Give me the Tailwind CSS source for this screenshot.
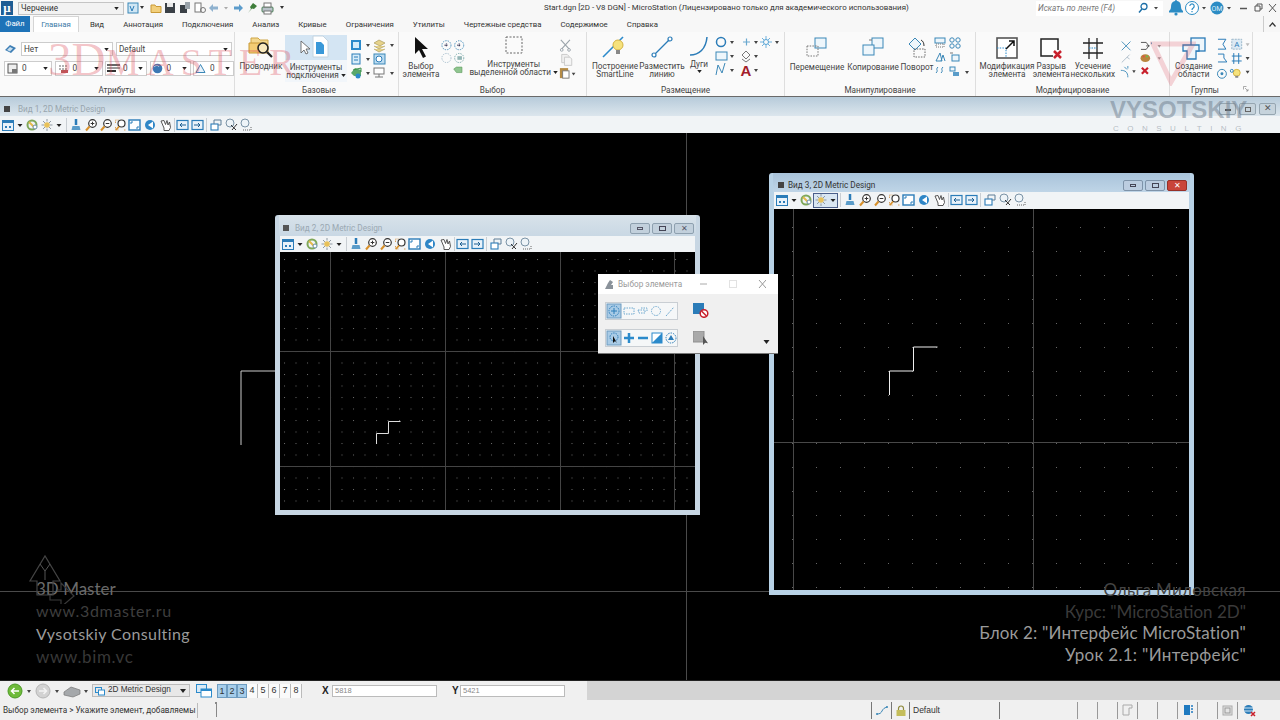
<!DOCTYPE html>
<html lang="ru">
<head>
    <meta charset="UTF-8">
    <title>MicroStation</title>
    <script src="https://cdn.jsdelivr.net/npm/@tailwindcss/browser@4"></script>
</head>
<body class="bg-black">
<svg class="hidden">
    <symbol id="dd" viewBox="0 0 6 4"><polygon points="0,0 6,0 3,4" fill="#222"/></symbol>
    <symbol id="viewbar" viewBox="0 0 256 16">
        <rect x="2.500" y="3.500" width="11" height="10" fill="#e8f2fa" stroke="#2b7cb8"/><rect x="2" y="3" width="12" height="3" fill="#2b7cb8"/><path d="M5 10h2M9 10h2" stroke="#2b7cb8" stroke-width="2"/>
        <polygon points="17.500,7 22.500,7 20,10" fill="#222"/>
        <circle cx="32" cy="8" r="4.500" fill="none" stroke="#7fa85a" stroke-width="2"/><path d="M29 5l6 6" stroke="#e4b94a" stroke-width="2"/><circle cx="35" cy="10" r="2" fill="#fff" stroke="#6a8fa8"/>
        <circle cx="47" cy="8" r="2.800" fill="#e7c15b"/><path d="M47 2v2.500M47 11.500v2.500M41.500 8h2.500M50 8h2.500M43 4l2 2M49 10l2 2M51 4l-2 2M45 10l-2 2" stroke="#8f9aa3"/>
        <polygon points="56.500,7 61.500,7 59,10" fill="#222"/>
        <path d="M66.500 1v14" stroke="#c9ced3"/>
        <path d="M76 2v6" stroke="#2b7cb8" stroke-width="2.500"/><path d="M71.500 13l1-4h7l1 4z" fill="#5a9cc9"/>
        <circle cx="92.500" cy="6.500" r="3.800" fill="#fff" stroke="#333" stroke-width="1.200"/><path d="M90.700 6.500h3.600M92.500 4.700v3.600" stroke="#333"/><path d="M89.500 9.500l-3.500 4" stroke="#d8912c" stroke-width="2"/>
        <circle cx="107.500" cy="6.500" r="3.800" fill="#fff" stroke="#333" stroke-width="1.200"/><path d="M105.700 6.500h3.600" stroke="#333"/><path d="M104.500 9.500l-3.500 4" stroke="#d8912c" stroke-width="2"/>
        <path d="M115.500 6V3h3M125.500 13h-2M115.500 10v3h3" fill="none" stroke="#d8a05c" stroke-dasharray="1.500 1"/><circle cx="121.500" cy="6.500" r="3.500" fill="#fff" stroke="#333" stroke-width="1.200"/><path d="M119 9.500l-3 3.500" stroke="#d8912c" stroke-width="1.800"/>
        <rect x="129" y="3" width="11" height="10" fill="#fff" stroke="#2b7cb8" stroke-width="1.400"/><path d="M131 5l2 0M131 5v2M138 11h-2M138 11V9" stroke="#2b7cb8"/>
        <circle cx="150" cy="8" r="5" fill="#2e86c6"/><path d="M153 4.500l-5 3.500 5 3.500z" fill="#fff"/>
        <path d="M161 4l3 7v2.500h5l1.500-3-1-5.500-1.500 3-1-4.500-1.500 4-1.500-4z" fill="#fff" stroke="#444" stroke-width=".9"/>
        <path d="M174.500 1v14" stroke="#c9ced3"/>
        <rect x="177" y="3.500" width="11" height="9" fill="#e8f2fa" stroke="#2b7cb8" stroke-width="1.200"/><path d="M186 8h-6M182 6l-2 2 2 2" fill="none" stroke="#1c5f91"/>
        <rect x="192" y="3.500" width="11" height="9" fill="#e8f2fa" stroke="#2b7cb8" stroke-width="1.200"/><path d="M194 8h6M198 6l2 2-2 2" fill="none" stroke="#1c5f91"/>
        <path d="M206.500 1v14" stroke="#c9ced3"/>
        <rect x="211" y="7" width="7" height="6" fill="#fff" stroke="#2b7cb8" stroke-width="1.100"/><path d="M214 7V3h7v5h-3" fill="none" stroke="#5c7d96"/>
        <circle cx="230" cy="6" r="4" fill="#eef4f8" stroke="#7b93a6"/><path d="M231 8l5 5M237 7l-5 6" stroke="#333"/>
        <circle cx="245" cy="6" r="4" fill="#eef4f8" stroke="#7b93a6"/><path d="M243 13h8M251 13V9" stroke="#666" stroke-dasharray="1 1"/>
    </symbol>
    <symbol id="ringdots" viewBox="0 0 12 12"><circle cx="6" cy="6" r="5" fill="none" stroke="#3a87b7" stroke-dasharray="1.500 1.200"/><path d="M4 6h4M6 4v4" stroke="#335" stroke-width="1.400" stroke-dasharray="1 1"/></symbol>
</svg>

<div class="relative w-[1280px] h-[720px] overflow-hidden flex flex-col bg-black text-[#444] font-['Roboto',sans-serif]">

    <!-- title bar -->
    <div class="h-[16px] shrink-0 flex items-center bg-[#f7f7f7] relative">
        <div class="ml-[1px] w-[12px] h-[14px] bg-[#1e5d94] text-white text-[13px] leading-[13px] text-center font-bold font-['Liberation_Serif',serif]">μ</div>
        <div class="ml-[5px] w-[106px] h-[13px] bg-[#f2f2f2] border border-[#c4c4c4] flex items-center justify-between px-[2px] text-[8.200px] text-[#333]">
            <span>Черчение</span><svg class="w-[5px] h-[3px] mr-[2px]"><use href="#dd"/></svg>
        </div>
        <svg class="ml-[3px] w-[160px] h-[16px]" viewBox="0 0 160 16">
            <rect x="1" y="3" width="10" height="10" fill="#cfe6f4" stroke="#3a87b7"/><path d="M3 6l2 5 2-5" fill="none" stroke="#2b7cb8"/>
            <polygon points="13,6 17,6 15,9" fill="#333"/>
            <path d="M24 5h4l1 1.500h5v6h-10z" fill="#f2cf7b" stroke="#c99a37"/>
            <rect x="38" y="3" width="10" height="10" fill="#3a4046"/><rect x="40" y="3" width="6" height="4" fill="#e8e8e8"/>
            <rect x="53" y="5" width="7" height="8" fill="#3a4046"/><rect x="58" y="2" width="5" height="7" fill="#9aa3aa"/>
            <rect x="68" y="3" width="6" height="9" fill="#fff" stroke="#777"/><circle cx="76" cy="10" r="2.500" fill="none" stroke="#777"/>
            <path d="M82 8l4-4v2.500h5v3h-5V12z" fill="#8fb2cf"/>
            <polygon points="97,7 101,7 99,9.500" fill="#aaa"/>
            <path d="M116 8l-4-4v2.500h-5v3h5V12z" fill="#5c9ccb"/>
            <path d="M121 13l3-4-1-2 3-4 4 3-3 3-2-.500z" fill="#3e7d3a"/>
            <rect x="135" y="7" width="11" height="5" rx="1" fill="#b9c2c9" stroke="#4a7f57"/><rect x="137" y="3" width="7" height="4" fill="#fff" stroke="#777"/><rect x="137" y="11" width="7" height="3" fill="#fff" stroke="#777"/>
            <polygon points="153,6 157,6 155,9" fill="#333"/>
        </svg>
        <span class="absolute left-[544px] top-[0px] text-[7.900px] leading-[16px] text-[#333] whitespace-nowrap">Start.dgn [2D - V8 DGN] - MicroStation (Лицензировано только для академического использования)</span>
        <div class="ml-auto flex items-center h-[16px]">
            <div class="w-[127px] h-[15px] bg-white flex items-center pl-[2px] text-[8.200px] italic text-[#777]">
                <span>Искать по ленте (F4)</span>
                <svg class="ml-auto mr-[2px] w-[24px] h-[12px]" viewBox="0 0 24 12"><circle cx="7" cy="4.500" r="3" fill="none" stroke="#1d6fa8" stroke-width="1.300"/><path d="M5 7L2 10.500" stroke="#1d6fa8" stroke-width="1.500"/><polygon points="17,5 21,5 19,7.500" fill="#444"/></svg>
            </div>
            <svg class="ml-[5px] w-[112px] h-[16px]" viewBox="0 0 112 16">
                <path d="M7 1a1 1 0 0 1 2 0c3 .5 4 3 4 6 0 2 1 3 2 4v1.500H1V11c1-1 2-2 2-4 0-3 1-5.500 4-6z" fill="#2c8cc4"/><circle cx="8" cy="14" r="1.600" fill="#2c8cc4"/>
                <circle cx="24" cy="8" r="6.500" fill="#fff" stroke="#2c8cc4"/><path d="M21.800 6a2.200 2.200 0 1 1 3.400 2c-1 .6-1.200 1-1.200 2M24 11v1.300" fill="none" stroke="#2c8cc4" stroke-width="1.200"/>
                <polygon points="34,7 38,7 36,9.500" fill="#444"/>
                <circle cx="49" cy="8" r="6.500" fill="#2c8cc4"/>
                <text x="49" y="10.500" font-size="7" fill="#dfeef8" text-anchor="middle" font-family="Roboto">OM</text>
                <polygon points="59,7 63,7 61,9.500" fill="#444"/>
                <path d="M72 8.500h7" stroke="#555" stroke-width="1.500"/>
                <path d="M87 6h5v5h-5zM89 6V4h5v5h-2" fill="none" stroke="#555"/>
                <path d="M101 4l7 8M108 4l-7 8" stroke="#555"/>
            </svg>
        </div>
    </div>

    <!-- ribbon tabs -->
    <div class="h-[16px] shrink-0 flex items-end bg-[#f7f7f7] text-[7.800px] leading-[18px] text-[#333]">
        <div class="w-[30px] h-[16px] bg-[#1e73b8] text-white text-center leading-[16px]">Файл</div>
        <div class="ml-[3px] w-[46px] h-[16px] bg-white border-x border-t border-[#d5d5d5] text-center text-[#3d7ba8] leading-[16px]">Главная</div>
        <div class="ml-[11px] flex gap-[19.100px] whitespace-nowrap h-[16px]">
            <span>Вид</span><span>Аннотация</span><span>Подключения</span><span>Анализ</span><span>Кривые</span><span>Ограничения</span><span>Утилиты</span><span>Чертежные средства</span><span>Содержимое</span><span>Справка</span>
        </div>
        <div class="ml-auto h-[16px] flex items-center border-l border-[#ccc] pl-[5px] pr-[4px]"><svg class="w-[7px] h-[5px]" viewBox="0 0 7 5"><path d="M.5 4.500l3-3.500 3 3.500" fill="none" stroke="#333" stroke-width="1.200"/></svg></div>
    </div>

    <!-- ribbon -->
    <div class="h-[65px] shrink-0 flex bg-[#fafafa] border-b border-[#6a6a6a] text-[8.200px] leading-[8.200px] text-[#444]">

        <!-- Атрибуты -->
        <div class="w-[235px] shrink-0 flex flex-col border-r border-[#dedede]">
            <div class="h-[51px] flex flex-col gap-[5px] pt-[10px] pl-[4px]">
                <div class="flex items-center h-[14px]">
                    <svg class="w-[13px] h-[12px]" viewBox="0 0 13 12"><path d="M1 7l5-5 6 3-5 5z" fill="#3f7fb5"/><path d="M3 7l3-3 3 1.500-3 3z" fill="#c9dfee"/></svg>
                    <div class="ml-[4px] w-[92px] h-[14px] bg-white border border-[#ccc] flex items-center justify-between pl-[2px] pr-[3px]"><span>Нет</span><svg class="w-[5px] h-[3px]"><use href="#dd"/></svg></div>
                    <div class="ml-[3px] w-[116px] h-[14px] bg-white border border-[#ccc] flex items-center justify-between pl-[2px] pr-[3px]"><span>Default</span><svg class="w-[5px] h-[3px]"><use href="#dd"/></svg></div>
                </div>
                <div class="flex gap-[2.500px] h-[15px]">
                    <div class="w-[48px] bg-white border border-[#ccc] flex items-center justify-between pl-[2px] pr-[3px]"><svg class="w-[11px] h-[11px]" viewBox="0 0 11 11"><rect x="1" y="1" width="9" height="9" fill="#eee" stroke="#555"/><rect x="5" y="6" width="5" height="4" fill="#777"/></svg><span class="mr-auto ml-[4px]">0</span><svg class="w-[5px] h-[3px]"><use href="#dd"/></svg></div>
                    <div class="w-[48px] bg-white border border-[#ccc] flex items-center justify-between pl-[2px] pr-[3px]"><svg class="w-[11px] h-[11px]" viewBox="0 0 11 11"><path d="M1 3h9M1 6h9" stroke="#666" stroke-dasharray="2 1"/><rect x="3" y="7" width="7" height="3" fill="#b95858"/></svg><span class="mr-auto ml-[4px]">0</span><svg class="w-[5px] h-[3px]"><use href="#dd"/></svg></div>
                    <div class="w-[42px] bg-white border border-[#ccc] flex items-center justify-between pl-[1px] pr-[3px]"><svg class="w-[13px] h-[11px]" viewBox="0 0 13 11"><path d="M0 2h13" stroke="#333" stroke-width="1.500"/><path d="M0 5h13" stroke="#333"/><path d="M0 8h9" stroke="#333" stroke-width="2"/></svg><span class="mr-auto ml-[3px]">0</span><svg class="w-[5px] h-[3px]"><use href="#dd"/></svg></div>
                    <div class="w-[41px] bg-white border border-[#ccc] flex items-center justify-between pl-[1px] pr-[3px]"><svg class="w-[11px] h-[11px]" viewBox="0 0 11 11"><circle cx="5.500" cy="5.500" r="4.800" fill="#3c78b4"/><path d="M2 4c2-2 4-2 5 0" stroke="#bcd8ee" fill="none"/></svg><span class="mr-auto ml-[4px]">0</span><svg class="w-[5px] h-[3px]"><use href="#dd"/></svg></div>
                    <div class="w-[41px] bg-white border border-[#ccc] flex items-center justify-between pl-[1px] pr-[3px]"><svg class="w-[11px] h-[11px]" viewBox="0 0 11 11"><path d="M5.500 1.500l4.500 8h-9z" fill="#e8f2fa" stroke="#3a87b7"/></svg><span class="mr-auto ml-[4px]">0</span><svg class="w-[5px] h-[3px]"><use href="#dd"/></svg></div>
                </div>
            </div>
            <div class="h-[13px] text-center leading-[15px]">Атрибуты</div>
        </div>

        <!-- Базовые -->
        <div class="w-[164px] shrink-0 flex flex-col border-r border-[#dedede]">
            <div class="h-[51px] flex pt-[3px]">
                <div class="ml-[4px] w-[44px] flex flex-col items-center">
                    <svg class="w-[26px] h-[24px]" viewBox="0 0 26 24"><path d="M3 6V3h7l2 2h8v5H3z" fill="#f3d88f" stroke="#cfa648"/><path d="M1 8h17l2 3v7H1z" fill="#f3cd74" stroke="#c99a37"/><circle cx="15" cy="13" r="5" fill="#f9e9bd" stroke="#222" stroke-width="1.600"/><path d="M19 17l5 5" stroke="#222" stroke-width="2.200"/></svg>
                    <span class="mt-[3px]">Проводник</span>
                </div>
                <div class="ml-[2px] w-[62px] h-[47px] flex flex-col items-center bg-[#f2f6fa]">
                    <div class="w-full h-[25px] bg-[#d4e5f3] flex justify-center">
                        <svg class="w-[32px] h-[25px]" viewBox="0 0 32 25"><path d="M1 6v12l3-3 2 4 2-1-2-4h4z" fill="#fff" stroke="#555" stroke-width=".8"/><path d="M13 1h10l5 5v16H13z" fill="#fff" stroke="#c4d4e0"/><path d="M16 7h5l3 3v9h-8z" fill="#3a98d8"/></svg>
                    </div>
                    <span class="mt-[3px] text-center">Инструменты</span>
                    <span class="flex items-center gap-[2px]">подключения<svg class="w-[5px] h-[3px]"><use href="#dd"/></svg></span>
                </div>
                <svg class="ml-[3px] w-[46px] h-[44px] mt-[2px]" viewBox="0 0 46 44">
                    <rect x="1" y="3" width="10" height="10" fill="#2b8acb"/><rect x="3" y="5" width="6" height="6" fill="#d4ecfa"/>
                    <polygon points="16,7 20,7 18,10" fill="#444"/>
                    <path d="M24 6l5-3 6 3-5 3zM24 9l5 3 6-3M24 12l5 3 6-3" fill="#e6d28a" stroke="#a99a5c" stroke-width=".7"/>
                    <polygon points="40,7 44,7 42,10" fill="#444"/>
                    <rect x="2" y="17" width="8" height="10" fill="#d7ecf9" stroke="#2b7cb8"/><path d="M4 20h4M4 23h4" stroke="#2b7cb8"/>
                    <polygon points="16,21 20,21 18,24" fill="#444"/>
                    <rect x="24" y="17" width="11" height="10" fill="#bcdcf1" stroke="#3a87b7"/><circle cx="29" cy="22" r="3" fill="#fff" stroke="#2b7cb8"/>
                    <path d="M1 36l4-5 6 2v6H4z" fill="#5aa86a"/><path d="M3 33l8-2v4" fill="none" stroke="#3a8e4a"/><circle cx="8" cy="39" r="2.500" fill="#2b8acb"/>
                    <polygon points="16,35 20,35 18,38" fill="#444"/>
                    <rect x="24" y="31" width="10" height="6" fill="#fff" stroke="#777"/><path d="M29 37v3h-4M29 40h4" fill="none" stroke="#777"/>
                    <polygon points="40,35 44,35 42,38" fill="#444"/>
                </svg>
            </div>
            <div class="h-[13px] leading-[15px] ml-[67px] whitespace-nowrap">Базовые</div>
        </div>

        <!-- Выбор -->
        <div class="w-[188px] shrink-0 flex flex-col border-r border-[#dedede]">
            <div class="h-[51px] flex pt-[4px]">
                <div class="ml-[4px] w-[36px] flex flex-col items-center">
                    <svg class="w-[14px] h-[22px]" viewBox="0 0 14 22"><path d="M1 1v17l4-4 4 8 3-1.500-4-7.500h6z" fill="#111"/></svg>
                    <span class="mt-[4px]">Выбор</span><span>элемента</span>
                </div>
                <svg class="ml-[2px] w-[26px] h-[44px]" viewBox="0 0 26 44">
                    <use href="#ringdots" x="0" y="2" width="12" height="12"/><use href="#ringdots" x="14" y="2" width="12" height="12"/>
                    <circle cx="6" cy="22" r="5" fill="none" stroke="#9fb9c9" stroke-dasharray="1.500 1.200"/><circle cx="20" cy="22" r="5" fill="none" stroke="#6fa3a3" stroke-dasharray="1.500 1.200"/><rect x="18" y="20" width="5" height="4" fill="#93b5b5"/>
                    <path d="M14 34l3-2h6v6h-6z" fill="#8fc58f" stroke="#5f9c5f" stroke-width=".7"/>
                </svg>
                <div class="ml-[7px] w-[84px] flex flex-col items-center">
                    <svg class="w-[18px] h-[18px]" viewBox="0 0 18 18"><rect x="1" y="1" width="16" height="16" fill="none" stroke="#666" stroke-dasharray="2 1.500"/></svg>
                    <span class="mt-[6px]">Инструменты</span>
                    <span class="flex items-center gap-[2px] whitespace-nowrap">выделенной области<svg class="w-[5px] h-[3px]"><use href="#dd"/></svg></span>
                </div>
                <svg class="ml-[3px] w-[30px] h-[46px]" viewBox="0 0 30 46">
                    <path d="M2 2l9 10M12 2L3 12" stroke="#9aa3aa" stroke-width="1.200"/><circle cx="3" cy="13" r="1.500" fill="none" stroke="#9aa3aa"/><circle cx="11" cy="13" r="1.500" fill="none" stroke="#9aa3aa"/>
                    <path d="M3 18h6l2 2v7H3z" fill="#f0f0f0" stroke="#c8c8c8"/><path d="M6 21h6l2 2v7H6z" fill="#f5f5f5" stroke="#c8c8c8"/>
                    <rect x="1" y="33" width="9" height="11" fill="#b58b45"/><rect x="4" y="36" width="7" height="8" fill="#fff" stroke="#777"/>
                    <polygon points="14,38 18,38 16,41" fill="#444"/>
                </svg>
            </div>
            <div class="h-[13px] text-center leading-[15px]">Выбор</div>
        </div>

        <!-- Размещение -->
        <div class="w-[198px] shrink-0 flex flex-col border-r border-[#dedede]">
            <div class="h-[51px] flex pt-[3px]">
                <div class="ml-[3px] w-[50px] flex flex-col items-center">
                    <svg class="w-[28px] h-[24px]" viewBox="0 0 28 24"><path d="M2 22L22 2" stroke="#2b8acb" stroke-width="1.600"/><circle cx="17" cy="10" r="5" fill="#f6e27c" stroke="#d4b243"/><rect x="15" y="15" width="4" height="4" fill="#888"/></svg>
                    <span class="mt-[3px]">Построение</span><span>SmartLine</span>
                </div>
                <div class="ml-[-1px] w-[46px] flex flex-col items-center">
                    <svg class="w-[24px] h-[24px]" viewBox="0 0 24 24"><path d="M4 20L20 4" stroke="#2b7cb8" stroke-width="1.200"/><circle cx="4" cy="20" r="2" fill="#fff" stroke="#2b7cb8" stroke-width="1.200"/><circle cx="20" cy="4" r="2" fill="#fff" stroke="#2b7cb8" stroke-width="1.200"/></svg>
                    <span class="mt-[3px]">Разместить</span><span>линию</span>
                </div>
                <div class="ml-[2px] w-[24px] flex flex-col items-center">
                    <svg class="w-[20px] h-[22px]" viewBox="0 0 20 22"><path d="M1 20c9 0 16-6 17-18" fill="none" stroke="#2b7cb8" stroke-width="1.500"/></svg>
                    <span class="mt-[3px]">Дуги</span>
                    <svg class="w-[5px] h-[3px] mt-[2px]"><use href="#dd"/></svg>
                </div>
                <svg class="ml-[3px] w-[66px] h-[44px]" viewBox="0 0 66 44">
                    <circle cx="7" cy="7" r="4.500" fill="none" stroke="#2b7cb8" stroke-width="1.500"/><polygon points="16,6 20,6 18,9" fill="#444"/>
                    <path d="M29 7h7M32.500 3.500v7" stroke="#6aa8cf" stroke-width="1.200"/><polygon points="40,6 44,6 42,9" fill="#444"/>
                    <circle cx="52" cy="7" r="2.500" fill="none" stroke="#4ea0d4"/><path d="M52 1v3M52 10v3M46 7h3M55 7h3M48 3l2 2M54 9l2 2M56 3l-2 2M50 9l-2 2" stroke="#4ea0d4" stroke-width=".8"/><polygon points="61,6 65,6 63,9" fill="#444"/>
                    <rect x="2" y="17" width="11" height="8" fill="#eef6fb" stroke="#3a87b7"/><polygon points="16,20 20,20 18,23" fill="#444"/>
                    <path d="M28 20l4-4 4 4-4 4zM28 24l4 3 4-3" fill="none" stroke="#777"/><polygon points="40,20 44,20 42,23" fill="#444"/>
                    <path d="M2 40l2-10 4 8 3-10" fill="none" stroke="#3a87b7"/><polygon points="16,34 20,34 18,37" fill="#444"/>
                    <text x="32" y="41" font-size="15" font-weight="700" fill="#a3202a" text-anchor="middle" font-family="Liberation Sans">A</text><polygon points="40,34 44,34 42,37" fill="#444"/>
                </svg>
            </div>
            <div class="h-[13px] text-center leading-[15px]">Размещение</div>
        </div>

        <!-- Манипулирование -->
        <div class="w-[191px] shrink-0 flex flex-col border-r border-[#dedede]">
            <div class="h-[51px] flex pt-[5px]">
                <div class="ml-[6px] w-[52px] flex flex-col items-center">
                    <svg class="w-[24px] h-[22px]" viewBox="0 0 24 22"><rect x="10" y="1" width="11" height="10" fill="#eef6fb" stroke="#3a87b7"/><rect x="2" y="9" width="11" height="10" fill="none" stroke="#777" stroke-dasharray="1.500 1.200"/></svg>
                    <span class="mt-[4px]">Перемещение</span>
                </div>
                <div class="ml-[5px] w-[50px] flex flex-col items-center">
                    <svg class="w-[24px] h-[22px]" viewBox="0 0 24 22"><rect x="11" y="1" width="11" height="10" fill="#eef6fb" stroke="#3a87b7"/><rect x="2" y="8" width="11" height="10" fill="#eef6fb" stroke="#3a87b7"/><path d="M8 3h3" stroke="#777"/></svg>
                    <span class="mt-[4px]">Копирование</span>
                </div>
                <div class="ml-[3px] w-[32px] flex flex-col items-center">
                    <svg class="w-[20px] h-[22px]" viewBox="0 0 20 22"><path d="M2 7l6-6 6 6-6 6z" fill="#eef6fb" stroke="#3a87b7"/><rect x="7" y="12" width="11" height="8" fill="none" stroke="#666" stroke-dasharray="1.500 1.200"/><path d="M14 3c2 1 3 3 3 6" fill="none" stroke="#333"/></svg>
                    <span class="mt-[4px]">Поворот</span>
                </div>
                <svg class="ml-[1px] w-[40px] h-[42px]" viewBox="0 0 40 42">
                    <rect x="1" y="1" width="10" height="5" fill="#eef6fb" stroke="#3a87b7"/><rect x="2" y="7" width="8" height="3" fill="none" stroke="#777" stroke-dasharray="1 1"/>
                    <circle cx="18" cy="3" r="2.200" fill="none" stroke="#3a87b7"/><circle cx="24" cy="3" r="2.200" fill="none" stroke="#3a87b7"/><circle cx="18" cy="9" r="2.200" fill="none" stroke="#3a87b7"/><circle cx="24" cy="9" r="2.200" fill="none" stroke="#3a87b7"/>
                    <path d="M2 24l4-8 2 8zM7 24l2-6 2 6" fill="none" stroke="#3a87b7"/>
                    <rect x="18" y="18" width="7" height="6" fill="#eef6fb" stroke="#3a87b7"/><path d="M16 16h3" stroke="#777"/>
                    <path d="M2 36c3-3-1-3 2-6M7 36c3-3-1-3 2-6" fill="none" stroke="#3a87b7"/>
                    <rect x="16" y="30" width="5" height="4" fill="#eef6fb" stroke="#3a87b7"/><rect x="19" y="35" width="6" height="4" fill="#5a9cc9"/>
                    <polygon points="31,34 35,34 33,37" fill="#444"/>
                </svg>
            </div>
            <div class="h-[13px] text-center leading-[15px]">Манипулирование</div>
        </div>

        <!-- Модифицирование -->
        <div class="w-[194px] shrink-0 flex flex-col border-r border-[#dedede]">
            <div class="h-[51px] flex pt-[5px]">
                <div class="ml-[4px] w-[54px] flex flex-col items-center">
                    <svg class="w-[22px] h-[22px]" viewBox="0 0 22 22"><rect x="1" y="1" width="20" height="20" fill="#fff" stroke="#555" stroke-width="1.600"/><path d="M1 11h9v10" fill="none" stroke="#2b8acb" stroke-dasharray="1.500 1.200"/><path d="M10 12l8-8M13 4h5v5" fill="none" stroke="#111" stroke-width="1.500"/></svg>
                    <span class="mt-[3px]">Модификация</span><span>элемента</span>
                </div>
                <div class="ml-[-2px] w-[44px] flex flex-col items-center">
                    <svg class="w-[24px] h-[23px]" viewBox="0 0 24 23"><path d="M14 19H2V2h17v11" fill="#fff" stroke="#222" stroke-width="1.500"/><path d="M15 14l7 7M22 14l-7 7" stroke="#c8202c" stroke-width="2.500"/></svg>
                    <span class="mt-[2px]">Разрыв</span><span>элемента</span>
                </div>
                <div class="ml-[0px] w-[46px] flex flex-col items-center whitespace-nowrap">
                    <svg class="w-[22px] h-[23px]" viewBox="0 0 22 23"><path d="M7 1v21M15 1v21M1 6h20M1 16h20" stroke="#222" stroke-width="1.300"/><path d="M7 11h8" stroke="#2b8acb" stroke-dasharray="1.500 1"/></svg>
                    <span class="mt-[2px]">Усечение</span><span>нескольких</span>
                </div>
                <svg class="ml-[5px] w-[56px] h-[44px]" viewBox="0 0 56 44">
                    <path d="M2 2l10 10M12 2L2 12" stroke="#3a87b7"/>
                    <path d="M24 3h6l3 4-3 4h-6M30 7h4" fill="none" stroke="#444"/><path d="M36 3v2" stroke="#3a87b7"/><polygon points="43,6 47,6 45,9" fill="#999"/>
                    <path d="M2 26l6-6M8 20l3-3M8 20l3 2" fill="none" stroke="#a9b9c5"/>
                    <ellipse cx="29" cy="21" rx="5.500" ry="4.500" fill="#b9853e"/><circle cx="27" cy="19" r="1" fill="#e44"/><circle cx="31" cy="19" r="1" fill="#5c5"/><polygon points="43,20 47,20 45,23" fill="#999"/>
                    <path d="M1 35c5 0 8 2 8 8M9 33v-3M5 31l3 3" fill="none" stroke="#3a87b7"/><polygon points="14,35 18,35 16,38" fill="#444"/>
                    <path d="M25 32l7 7M32 32l-7 7" stroke="#c8202c" stroke-width="2.500"/>
                </svg>
            </div>
            <div class="h-[13px] text-center leading-[15px]">Модифицирование</div>
        </div>

        <!-- Группы -->
        <div class="w-[83px] shrink-0 flex flex-col border-r border-[#dedede]">
            <div class="h-[51px] flex pt-[5px]">
                <div class="ml-[2px] w-[44px] flex flex-col items-center">
                    <svg class="w-[24px] h-[24px]" viewBox="0 0 24 24"><rect x="9" y="1" width="14" height="13" fill="#eef6fb" stroke="#2b7cb8" stroke-width="1.300"/><path d="M1 8h16v6h-3v8H5v-8H1z" fill="#eef6fb" stroke="#2b7cb8" stroke-width="1.300"/></svg>
                    <span class="mt-[1px]">Создание</span><span>области</span>
                </div>
                <svg class="ml-[1px] w-[36px] h-[44px]" viewBox="0 0 36 44">
                    <path d="M2 2h8l-3 5 3 5H2" fill="none" stroke="#2b7cb8"/><rect x="16" y="2" width="10" height="10" fill="#dceaf4" stroke="#9ab6c9" stroke-dasharray="2 1"/><text x="21" y="10" font-size="8" fill="#2b7cb8" text-anchor="middle" font-family="Roboto">A</text><polygon points="30,6 34,6 32,9" fill="#bbb"/>
                    <path d="M2 17h6v4l3 4H2" fill="none" stroke="#2b7cb8"/><path d="M18 16v11M23 16v11M16 19h10M16 24h10" stroke="#2b7cb8"/><polygon points="30,20 34,20 32,23" fill="#444"/>
                    <circle cx="6" cy="37" r="4.500" fill="none" stroke="#3a87b7"/><circle cx="6" cy="37" r="1.500" fill="#3a87b7"/><circle cx="21" cy="36" r="3.500" fill="#f6e27c" stroke="#d4b243"/><rect x="19.500" y="39" width="3" height="2" fill="#888"/><circle cx="16" cy="34" r="1.500" fill="none" stroke="#3a87b7"/><polygon points="30,34 34,34 32,37" fill="#444"/>
                </svg>
            </div>
            <div class="h-[13px] flex items-start justify-between leading-[15px] pl-[21px] pr-[3px]"><span>Группы</span><svg class="w-[6px] h-[6px] mt-[3px]" viewBox="0 0 6 6"><path d="M.5 .5h3M.5 .5v3M2 2l3 3M5 3v2H3" fill="none" stroke="#888" stroke-width=".7"/></svg></div>
        </div>
        <div class="flex-1"></div>
    </div>

    <!-- view 1 -->
    <div class="h-[19px] shrink-0 flex items-center pt-[5px] bg-gradient-to-b from-[#b7cbda] to-[#dce6ed] pl-[4px] text-[8.200px] text-[#98a5ad]">
        <span class="w-[6px] h-[6px] bg-[#444]"></span>
        <span class="ml-[8px]">Вид 1, 2D Metric Design</span>
        <div class="ml-auto mr-[4px] flex gap-[3px]">
            <span class="w-[17px] h-[12px] rounded-[2px] bg-[#c6d3dc] border border-[#96a6b1] flex items-end justify-center pb-[3px]"><span class="w-[6px] h-[2px] border border-[#555]"></span></span>
            <span class="w-[17px] h-[12px] rounded-[2px] bg-[#c6d3dc] border border-[#96a6b1] flex items-center justify-center"><span class="w-[6px] h-[5px] border border-[#666]"></span></span>
            <span class="w-[17px] h-[12px] rounded-[2px] bg-[#c6d3dc] border border-[#96a6b1] text-center text-[9px] leading-[9px] text-[#555]">✕</span>
        </div>
    </div>
    <div class="h-[17px] shrink-0 pt-[1px] bg-[#f1f4f6]"><svg class="w-[256px] h-[16px]"><use href="#viewbar"/></svg></div>

    <div class="relative flex-1 bg-black">
        <!-- view 1 drawing -->
        <svg class="absolute inset-0 w-[1280px] h-[547px]" viewBox="0 133 1280 547">
            <path d="M686.500 133v547M0 591.500h1280" stroke="#4a4a4a"/>
            <path d="M241 445V371h34" fill="none" stroke="#ccc"/>
        </svg>

        <!-- view 2 -->
        <div class="absolute left-[275px] top-[82px] w-[425px] h-[300px] flex flex-col bg-[#c7d6e3] rounded-t-[3px] px-[5px] pb-[5px]">
            <div class="h-[21px] flex items-center pt-[5px] -mx-[1px] text-[8.200px] text-[#9aa8b2] bg-gradient-to-b from-[#d8e2ea] to-[#c9d8e4]">
                <span class="ml-[4px] w-[6px] h-[6px] bg-[#555]"></span>
                <span class="ml-[6px]">Вид 2, 2D Metric Design</span>
                <div class="ml-auto mr-[2px] flex gap-[2px]">
                    <span class="w-[20px] h-[11px] rounded-[2px] bg-[#c2d0dc] border border-[#8ea0af] flex items-center justify-center"><span class="w-[6px] h-[3px] border border-[#556]"></span></span>
                    <span class="w-[20px] h-[11px] rounded-[2px] bg-[#c2d0dc] border border-[#8ea0af] flex items-center justify-center"><span class="w-[7px] h-[5px] border border-[#445]"></span></span>
                    <span class="w-[20px] h-[11px] rounded-[2px] bg-[#c2d0dc] border border-[#8ea0af] text-center text-[8px] leading-[9px] text-[#556]">✕</span>
                </div>
            </div>
            <div class="h-[16px] shrink-0 bg-[#f1f4f6]"><svg class="w-[256px] h-[16px]"><use href="#viewbar"/></svg></div>
            <svg class="w-[415px] h-[258px] bg-black" viewBox="0 0 415 258">
                <defs><pattern id="dots2" x="4" y="7" width="11.500" height="11.500" patternUnits="userSpaceOnUse"><rect width="1" height="1" fill="#6a6a6a"/></pattern></defs>
                <rect width="415" height="258" fill="url(#dots2)"/>
                <path d="M50.500 0v258M165.500 0v258M280.500 0v258M394.500 0v258M0 99.500h415M0 214.500h415" stroke="#444"/>
                <path d="M96.500 192v-10.500h12v-12h12" fill="none" stroke="#ddd"/>
            </svg>
        </div>

        <!-- view 3 -->
        <div class="absolute left-[769px] top-[40px] w-[425px] h-[422px] flex flex-col bg-[#b8d2e6] rounded-t-[3px] px-[5px] pb-[5px]">
            <div class="h-[19px] flex items-center pt-[5px] -mx-[1px] text-[8.200px] text-[#333] bg-gradient-to-b from-[#a9c3da] to-[#bfd5e7]">
                <span class="ml-[5px] w-[6px] h-[6px] bg-[#444]"></span>
                <span class="ml-[4px]">Вид 3, 2D Metric Design</span>
                <div class="ml-auto mr-[3px] flex gap-[2px]">
                    <span class="w-[20px] h-[11px] rounded-[2px] bg-[#bccde0] border border-[#7e93a9] flex items-center justify-center"><span class="w-[6px] h-[3px] border border-[#445]"></span></span>
                    <span class="w-[20px] h-[11px] rounded-[2px] bg-[#bccde0] border border-[#7e93a9] flex items-center justify-center"><span class="w-[7px] h-[5px] border border-[#445]"></span></span>
                    <span class="w-[20px] h-[11px] rounded-[2px] bg-[#c9443a] border border-[#963028] text-center text-[8px] leading-[9px] text-white">✕</span>
                </div>
            </div>
            <div class="relative h-[17px] shrink-0 bg-[#f1f4f6]">
                <span class="absolute left-[39px] top-[1px] w-[25px] h-[15px] bg-[#d9e6f2] border border-[#4b5f8a]"></span>
                <svg class="relative w-[256px] h-[16px]"><use href="#viewbar"/></svg>
            </div>
            <svg class="w-[415px] h-[381px] bg-black" viewBox="0 0 415 381">
                <defs><pattern id="dots3" x="18" y="18" width="24" height="24" patternUnits="userSpaceOnUse"><rect width="1" height="1" fill="#666"/></pattern></defs>
                <rect width="415" height="381" fill="url(#dots3)"/>
                <path d="M19.500 0v381M259.500 0v381M0 233.500h415" stroke="#484848"/>
                <path d="M115.500 186v-24h24v-24h24" fill="none" stroke="#eee"/>
            </svg>
        </div>

        <!-- element selection dialog -->
        <div class="absolute left-[598px] top-[141px] w-[180px] h-[80px] flex flex-col bg-[#f0f0f0] border-b border-[#777] text-[8.200px]">
            <div class="h-[20px] bg-white flex items-center pl-[6px] text-[#9a9a9a]">
                <svg class="w-[10px] h-[11px]" viewBox="0 0 10 11"><path d="M1 10l3-6 2-3 3 2-2 3h2v4z" fill="#8a929a"/></svg>
                <span class="ml-[4px]">Выбор элемента</span>
                <svg class="ml-auto mr-[12px] w-[66px] h-[10px]" viewBox="0 0 66 10"><path d="M0 5h7" stroke="#aaa"/><rect x="29.500" y="1.500" width="7" height="7" fill="none" stroke="#e2e2e2"/><path d="M59 1l7 8M66 1l-7 8" stroke="#999"/></svg>
            </div>
            <div class="flex-1 relative flex">
                <div class="ml-[7px] flex flex-col gap-[9px] pt-[8px]">
                    <svg class="w-[73px] h-[18px]" viewBox="0 0 73 18">
                        <rect x=".5" y=".5" width="72" height="17" fill="#f5f7f8" stroke="#c9ced3"/><rect x="2" y="2" width="14" height="14" fill="#a9cbe6" stroke="#6e9cc0"/>
                        <circle cx="9" cy="9" r="5" fill="none" stroke="#2b7cb8" stroke-dasharray="1.500 1"/><path d="M9 6v6M6 9h6" stroke="#2b7cb8"/>
                        <rect x="19" y="6" width="10" height="6" fill="none" stroke="#6ea8cf" stroke-dasharray="1.500 1"/>
                        <path d="M33 8h7v3h-6zM36 6h6v3" fill="none" stroke="#6ea8cf" stroke-dasharray="1.500 1"/>
                        <circle cx="51" cy="9" r="4.500" fill="none" stroke="#6ea8cf" stroke-dasharray="1.500 1"/>
                        <path d="M61 14l8-9" stroke="#6ea8cf" stroke-dasharray="2 1"/>
                    </svg>
                    <svg class="w-[73px] h-[18px]" viewBox="0 0 73 18">
                        <rect x=".5" y=".5" width="72" height="17" fill="#f5f7f8" stroke="#c9ced3"/><rect x="2" y="2" width="14" height="14" fill="#a9cbe6" stroke="#6e9cc0"/>
                        <circle cx="9" cy="8" r="4" fill="none" stroke="#2b7cb8" stroke-dasharray="1.500 1"/><path d="M8 7v7l2-2 2 2z" fill="#111"/>
                        <path d="M19 9h10M24 4v10" stroke="#2b8acb" stroke-width="2.500"/>
                        <path d="M33 9h10" stroke="#2b8acb" stroke-width="2.500"/>
                        <rect x="47" y="4" width="10" height="10" fill="#fff" stroke="#2b8acb"/><path d="M47 14L57 4v10z" fill="#2b8acb"/>
                        <circle cx="66" cy="9" r="5" fill="none" stroke="#2b7cb8" stroke-dasharray="1.500 1"/><path d="M66 6l3 5h-6z" fill="#2b7cb8"/>
                    </svg>
                </div>
                <div class="ml-[15px] flex flex-col gap-[13px] pt-[9px]">
                    <svg class="w-[16px] h-[15px]" viewBox="0 0 16 15"><rect x="0" y="0" width="11" height="11" fill="#2b7cb8"/><circle cx="11" cy="10.500" r="3.800" fill="#fff" stroke="#c8202c" stroke-width="1.500"/><path d="M8.500 8l5 5" stroke="#c8202c" stroke-width="1.500"/></svg>
                    <svg class="w-[16px] h-[15px]" viewBox="0 0 16 15"><rect x="0" y="0" width="11" height="11" fill="#a9a9a9" stroke="#8f8f8f"/><path d="M10 5v9l2.200-2.200 2.800.5z" fill="#555"/></svg>
                </div>
                <svg class="absolute right-[8px] bottom-[9px] w-[7px] h-[4px]"><use href="#dd"/></svg>
            </div>
        </div>

        <!-- course captions -->
        <div class="absolute left-[36px] top-[421px] w-[240px] h-[135px] font-['Lato',sans-serif]">
            <svg class="absolute left-[-10px] top-[0px] w-[70px] h-[50px]" viewBox="0 0 70 50">
                <path d="M4 27h7v14h16V27h7L19 2z" fill="none" stroke="#444" stroke-width="1.200"/>
                <path d="M14 10l5 7 5-7M19 17v9" fill="none" stroke="#555"/>
                <path d="M24 41v5h11v7l13-11-13-13v7h-4" fill="none" stroke="#3a3a3a" stroke-width="1.200"/>
            </svg>
            <div class="flex flex-col pt-[24px] text-[16px] leading-[21.500px] whitespace-nowrap">
                <span class="text-[#6a6a6a] text-[17px]">3D Master</span>
                <span class="text-[#3e3e3e] tracking-[.7px]">www.3dmaster.ru</span>
                <span class="text-[#9a9a9a] tracking-[.4px] mt-[2px]">Vysotskiy Consulting</span>
                <span class="text-[#383838] text-[17px] mt-[1px] tracking-[.6px]">www.bim.vc</span>
            </div>
        </div>
        <div class="absolute right-[34px] top-[446px] flex flex-col items-end text-[17px] leading-[21.500px] whitespace-nowrap font-['Lato',sans-serif]">
            <span class="text-[#444] tracking-[.3px]">Ольга Миловская</span>
            <span class="text-[#3a3a3a]">Курс: "MicroStation 2D"</span>
            <span class="text-[#9a9a9a] tracking-[.15px]">Блок 2: "Интерфейс MicroStation"</span>
            <span class="text-[#9a9a9a] tracking-[.3px]">Урок 2.1: "Интерфейс"</span>
        </div>
    </div>

    <!-- status rows -->
    <div class="h-[20px] shrink-0 flex items-center bg-[#d4d4d4] border-t border-[#222] text-[8.200px] text-[#333]">
        <div class="w-[587px] h-full flex items-center bg-[#f0f0f0]">
            <svg class="ml-[6px] w-[84px] h-[18px]" viewBox="0 0 84 18">
                <circle cx="9" cy="9" r="7" fill="#6fbb3a" stroke="#4b9a24"/><path d="M13 9H6M8.500 6L5.500 9l3 3" fill="none" stroke="#fff" stroke-width="1.500"/>
                <polygon points="21,8 25,8 23,11" fill="#444"/>
                <circle cx="37" cy="9" r="7" fill="#d2d2d2" stroke="#b5b5b5"/><path d="M33 9h7M37.500 6l3 3-3 3" fill="none" stroke="#f3f3f3" stroke-width="1.500"/>
                <polygon points="49,8 53,8 51,11" fill="#444"/>
                <path d="M58 10l7-5 9 3v4l-7 3-9-2z" fill="#a5a8ab" stroke="#777" stroke-width=".7"/>
                <polygon points="78,8 82,8 80,11" fill="#444"/>
            </svg>
            <div class="ml-[2px] w-[98px] h-[13px] bg-[#e8e8e8] border border-[#bbb] flex items-center pl-[2px] font-['Liberation_Sans',sans-serif]">
                <svg class="w-[10px] h-[10px]" viewBox="0 0 10 10"><rect x=".5" y="1.500" width="6" height="5" fill="none" stroke="#2b8acb"/><rect x="3.500" y="4" width="6" height="5" fill="#fff" stroke="#2b8acb"/></svg>
                <span class="ml-[3px]">2D Metric Design</span>
                <svg class="ml-auto mr-[3px] w-[6px] h-[4px]"><use href="#dd"/></svg>
            </div>
            <svg class="ml-[6px] w-[16px] h-[14px]" viewBox="0 0 16 14"><rect x=".5" y=".5" width="10" height="8" fill="#d9eaf6" stroke="#2b8acb"/><rect x="5" y="5" width="10.500" height="8" fill="#fff" stroke="#2b8acb"/><rect x="5" y="5" width="10.500" height="2" fill="#2b8acb"/></svg>
            <div class="ml-[5px] flex h-[14px] text-[9px] leading-[13px] text-center font-['Liberation_Sans',sans-serif]">
                <span class="w-[10px] bg-[#a6cdea] border border-[#6e9cc0]">1</span><span class="w-[10px] bg-[#a6cdea] border border-[#6e9cc0]">2</span><span class="w-[10px] bg-[#a6cdea] border border-[#6e9cc0]">3</span><span class="w-[11px] bg-[#fafafa] border-r border-[#bbb]">4</span><span class="w-[11px] bg-[#fafafa] border-r border-[#bbb]">5</span><span class="w-[11px] bg-[#fafafa] border-r border-[#bbb]">6</span><span class="w-[11px] bg-[#fafafa] border-r border-[#bbb]">7</span><span class="w-[11px] bg-[#fafafa] border-r border-[#bbb]">8</span>
            </div>
            <span class="ml-[20px] w-[10px] text-[10px] font-bold text-[#222] font-['Liberation_Sans',sans-serif]">X</span>
            <div class="w-[105px] h-[12px] bg-white border border-[#bbb] pl-[2px] text-[7.500px] leading-[10px] text-[#888] font-['Liberation_Sans',sans-serif]">5818</div>
            <span class="ml-[15px] w-[8px] text-[10px] font-bold text-[#222] font-['Liberation_Sans',sans-serif]">Y</span>
            <div class="w-[105px] h-[12px] bg-white border border-[#bbb] pl-[2px] text-[7.500px] leading-[10px] text-[#888] font-['Liberation_Sans',sans-serif]">5421</div>
        </div>
    </div>
    <div class="h-[20px] shrink-0 flex items-center bg-[#f0f0f0] text-[8.200px] text-[#333]">
        <span class="ml-[3px] w-[194px] whitespace-nowrap overflow-hidden">Выбор элемента &gt; Укажите элемент, добавляемы</span>
        <span class="w-[1px] h-[15px] bg-[#bbb]"></span>
        <svg class="ml-[16px] w-[4px] h-[16px]" viewBox="0 0 4 16"><path d="M1 1h2" stroke="#222"/><path d="M2.500 1v14" stroke="#888"/></svg>
        <div class="ml-[653px] flex items-center h-[17px] border-l border-[#777]">
            <svg class="w-[18px] h-[14px] ml-[1px]" viewBox="0 0 18 14"><path d="M4 11c3 0 4-1 5-3s2-3 5-4" fill="none" stroke="#3a87b7"/><circle cx="4" cy="11" r="1" fill="#3a87b7"/><circle cx="14" cy="4" r="1" fill="#3a87b7"/></svg>
        </div>
        <div class="flex items-center justify-center w-[18px] h-[17px] border-l border-[#777]">
            <svg class="w-[10px] h-[11px]" viewBox="0 0 10 11"><path d="M2.500 5V3.500a2.500 2.500 0 0 1 5 0V5" fill="none" stroke="#8f8a3e" stroke-width="1.200"/><rect x=".5" y="5" width="9" height="6" fill="#c4bd5a"/></svg>
        </div>
        <div class="w-[90px] h-[17px] border-l border-[#777] pl-[3px] leading-[17px] text-[8.500px] font-['Liberation_Sans',sans-serif]">Default</div>
        <div class="w-[78px] h-[17px] border-l border-[#777]"></div>
        <div class="w-[20px] h-[17px] border-l border-[#999]"></div>
        <div class="w-[20px] h-[17px] border-l border-[#999]"></div>
        <div class="w-[20px] h-[17px] border-l border-[#999] flex items-center justify-center"><svg class="w-[11px] h-[12px]" viewBox="0 0 11 12"><path d="M1 1h9v3H7v7H1z" fill="none" stroke="#aaa"/></svg></div>
        <div class="w-[20px] h-[17px] border-l border-[#999]"></div>
        <div class="w-[20px] h-[17px] border-l border-[#999]"></div>
        <div class="w-[20px] h-[17px] border-l border-[#999] flex items-center justify-center"><svg class="w-[10px] h-[12px]" viewBox="0 0 10 12"><rect x="1" y="1" width="6" height="10" fill="#1f7ac0"/><path d="M8 2h2M8 5h2M8 8h2" stroke="#1f7ac0" stroke-width="1.500"/></svg></div>
        <div class="w-[20px] h-[17px] border-l border-[#999]"></div>
        <div class="w-[20px] h-[17px] border-l border-[#999] flex items-center justify-center"><svg class="w-[11px] h-[11px]" viewBox="0 0 11 11"><rect x="1" y="1" width="9" height="9" fill="#e4e4e4" stroke="#aaa"/><rect x="3" y="3" width="5" height="5" fill="none" stroke="#999"/></svg></div>
        <div class="w-[23px] h-[17px] border-l border-[#999] flex items-center justify-center"><svg class="w-[13px] h-[13px]" viewBox="0 0 13 13"><circle cx="5.500" cy="5.500" r="4.500" fill="#2b7cb8"/><path d="M1 4h9M1 7h9" stroke="#cfe5f4"/><path d="M8 8l4 4M12 8l-4 4" stroke="#c8202c" stroke-width="1.500"/></svg></div>
    </div>

    <!-- watermarks lying over the ribbon -->
    <div class="absolute left-[48px] top-[36px] flex items-baseline text-[rgba(218,70,85,0.33)] font-['Liberation_Serif',serif] whitespace-nowrap pointer-events-none">
        <span class="text-[47px] leading-[46px]">3D</span><span class="text-[38px] leading-[46px] tracking-[7px]">MASTER</span>
    </div>
    <svg class="absolute left-[1150px] top-[40px] w-[46px] h-[46px] pointer-events-none" viewBox="0 0 46 46"><path d="M3 4h40L21 42z" fill="none" stroke="rgba(218,70,85,0.22)" stroke-width="5"/></svg>
    <div class="absolute left-[1110px] top-[96px] flex flex-col pointer-events-none font-['Liberation_Sans',sans-serif]">
        <span class="text-[24px] leading-[28px] font-bold text-[rgba(110,125,140,0.5)] whitespace-nowrap">VYSOTSKIY</span>
        <span class="ml-[3px] text-[8px] leading-[9px] text-[rgba(130,140,150,0.55)] tracking-[8.500px] whitespace-nowrap">CONSULTING</span>
    </div>
</div>
</body>
</html>
